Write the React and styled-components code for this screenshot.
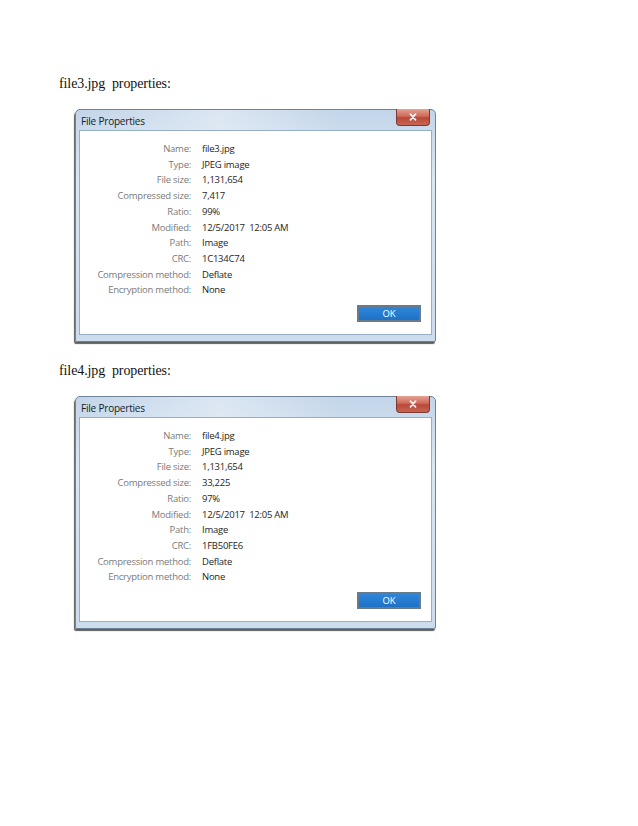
import React from "react";
import styled, { createGlobalStyle } from "styled-components";

const GlobalStyle = createGlobalStyle`
  html, body {
    margin: 0;
    padding: 0;
    background: #ffffff;
  }
`;

const Page = styled.div`
  width: 638px;
  min-height: 826px;
  padding: 76px 0 0 59px;
  box-sizing: border-box;
`;

const Section = styled.section`
  margin-bottom: 21px;
`;

const Heading = styled.p`
  margin: 0 0 18px;
  font-family: "Liberation Serif", "Times New Roman", serif;
  font-size: 14px;
  line-height: 15px;
  color: #111;
  white-space: pre;
  letter-spacing: -0.1px;
`;

const Dialog = styled.div`
  margin-left: 16px;
  width: 361px;
  box-sizing: border-box;
  border: 1px solid #6f8296;
  border-radius: 5px 5px 2px 2px;
  background: linear-gradient(180deg, #c3d5e9 0%, #d9e6f3 30%, #cbdcee 100%);
  box-shadow: -1px 2px 1px rgba(40, 40, 40, 0.75);
  padding: 0 3px 6px;
`;

const TitleBar = styled.div`
  height: 20px;
  display: flex;
  align-items: center;
  justify-content: space-between;
  background: linear-gradient(
    90deg,
    rgba(255, 255, 255, 0) 0%,
    rgba(255, 255, 255, 0.4) 40%,
    rgba(255, 255, 255, 0) 75%
  );
`;

const Title = styled.span`
  font-family: "Open Sans", "Noto Sans", sans-serif;
  font-size: 10px;
  font-weight: 400;
  color: #141c26;
  letter-spacing: -0.2px;
  padding-left: 2px;
  padding-top: 2px;
`;

const CloseButton = styled.div`
  align-self: flex-start;
  width: 34px;
  height: 17px;
  margin-top: -1px;
  margin-right: 2px;
  box-sizing: border-box;
  border: 1px solid #7a3a30;
  border-top: none;
  border-radius: 0 0 4px 4px;
  background: linear-gradient(180deg, #e3a397 0%, #cf6a57 45%, #b8483a 55%, #c96552 100%);
  display: flex;
  align-items: center;
  justify-content: center;
`;

const Panel = styled.div`
  background: #ffffff;
  border: 1px solid #98aec6;
  padding: 10px 10px 12px 0;
  display: flex;
  flex-direction: column;
`;

const Rows = styled.div`
  display: grid;
  grid-template-columns: 111px 1fr;
  column-gap: 11px;
  font-family: "Open Sans", "Noto Sans", sans-serif;
  font-size: 9.5px;
  line-height: 15.7px;
  letter-spacing: -0.25px;
`;

const Label = styled.span`
  text-align: right;
  color: #7a7a7a;
  white-space: nowrap;
`;

const Value = styled.span`
  color: #1e1e1e;
  white-space: pre;
`;

const Footer = styled.div`
  display: flex;
  justify-content: flex-end;
  margin-top: 7px;
`;

const OkButton = styled.button`
  width: 64px;
  height: 17px;
  padding: 0;
  border: 2px solid #6b7a89;
  background: linear-gradient(180deg, #2f86d8 0%, #1d72c7 100%);
  color: #ffffff;
  font-family: "Open Sans", "Noto Sans", sans-serif;
  font-size: 9.5px;
  line-height: 13px;
`;

const CloseX = () => (
  <svg width="10" height="8" viewBox="0 0 10 8">
    <path d="M2.5 1.2 L7.5 6.8 M7.5 1.2 L2.5 6.8" stroke="#f4f0ee" strokeWidth="1.8" strokeLinecap="round" />
  </svg>
);

const files = [
  {
    name: "file3.jpg",
    props: [
      ["Name:", "file3.jpg"],
      ["Type:", "JPEG image"],
      ["File size:", "1,131,654"],
      ["Compressed size:", "7,417"],
      ["Ratio:", "99%"],
      ["Modified:", "12/5/2017  12:05 AM"],
      ["Path:", "Image"],
      ["CRC:", "1C134C74"],
      ["Compression method:", "Deflate"],
      ["Encryption method:", "None"],
    ],
  },
  {
    name: "file4.jpg",
    props: [
      ["Name:", "file4.jpg"],
      ["Type:", "JPEG image"],
      ["File size:", "1,131,654"],
      ["Compressed size:", "33,225"],
      ["Ratio:", "97%"],
      ["Modified:", "12/5/2017  12:05 AM"],
      ["Path:", "Image"],
      ["CRC:", "1FB50FE6"],
      ["Compression method:", "Deflate"],
      ["Encryption method:", "None"],
    ],
  },
];

const PropertiesDialog = ({ props }) => (
  <Dialog>
    <TitleBar>
      <Title>File Properties</Title>
      <CloseButton>
        <CloseX />
      </CloseButton>
    </TitleBar>
    <Panel>
      <Rows>
        {props.map(([label, value]) => (
          <React.Fragment key={label}>
            <Label>{label}</Label>
            <Value>{value}</Value>
          </React.Fragment>
        ))}
      </Rows>
      <Footer>
        <OkButton>OK</OkButton>
      </Footer>
    </Panel>
  </Dialog>
);

const App = () => (
  <>
    <GlobalStyle />
    <Page>
      {files.map((f) => (
        <Section key={f.name}>
          <Heading>{`${f.name}  properties:`}</Heading>
          <PropertiesDialog props={f.props} />
        </Section>
      ))}
    </Page>
  </>
);

export default App;
